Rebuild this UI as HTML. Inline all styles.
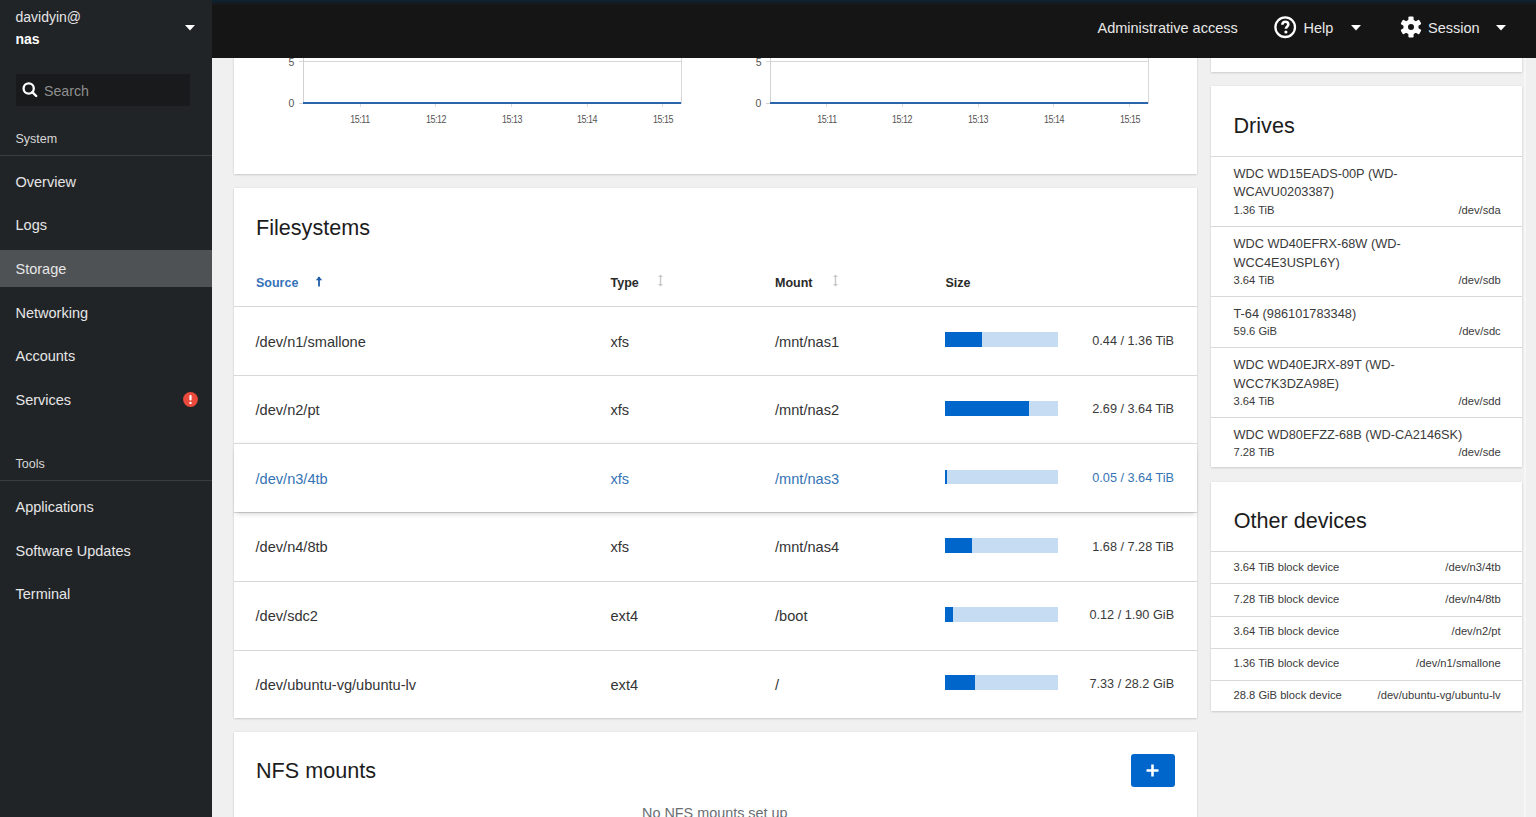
<!DOCTYPE html>
<html><head><meta charset="utf-8">
<style>
*{margin:0;padding:0;box-sizing:border-box}
html,body{width:1536px;height:817px;overflow:hidden;background:#f0f0f0;font-family:"Liberation Sans",sans-serif;color:#151515}
.a{position:absolute;white-space:nowrap;line-height:1}
#side{position:absolute;left:0;top:0;width:212px;height:817px;background:#212427}
#side .a{color:#e6e6e6}
#hdr{position:absolute;left:212px;top:0;width:1324px;height:58px;background:#151515}
#hdr .a{color:#e8e8e8}
.card{position:absolute;background:#fff;box-shadow:0 1px 2px 0 rgba(3,3,3,.14),0 0 2px 0 rgba(3,3,3,.06)}
.hl{position:absolute;height:1px;background:#d8d8d8}
.t{font-size:14.6px;color:#333}
.cap{font-size:12.5px;font-weight:bold;color:#2a2a2a}
.ttl{font-size:21.6px;color:#1c1c1c}
.pb{position:absolute;height:14.8px;width:113px;background:#c6dcf2}
.pb i{position:absolute;left:0;top:0;height:14.8px;background:#0066cc}
.sz{font-size:12.7px;color:#3a3a3a}
.dn{font-size:12.75px;color:#3a3a3a}
.ds{font-size:11.2px;color:#3a3a3a;margin-top:.8px}
.od{font-size:11.2px;color:#3a3a3a}
.ax{font-size:10.5px;color:#555}
.axl{font-size:10.5px;color:#555;width:40px;text-align:center;letter-spacing:-0.5px;transform:scaleX(.85)}
</style></head><body>

<div id="side">
  <div class="a" style="left:15.5px;top:9.5px;font-size:14px;">davidyin@</div>
  <div class="a" style="left:15.5px;top:31.5px;font-size:14px;font-weight:bold;color:#fff">nas</div>
  <svg style="position:absolute;left:185px;top:25px" width="10" height="6" viewBox="0 0 10 6"><path d="M0 0H10L5 5.5Z" fill="#fff"/></svg>
  <div style="position:absolute;left:16px;top:73.8px;width:174px;height:32.4px;background:#191a1b"></div>
  <svg style="position:absolute;left:22px;top:82.2px" width="16" height="16" viewBox="0 0 16 16"><circle cx="6.7" cy="6.5" r="5.1" fill="none" stroke="#fff" stroke-width="2.3"/><path d="M10.3 10.1L14.2 14" stroke="#fff" stroke-width="2.4" stroke-linecap="round"/></svg>
  <div class="a" style="left:44px;top:84px;font-size:14.2px;color:#8f8f8f">Search</div>
  <div class="a" style="left:15.5px;top:132.7px;font-size:12.5px;color:#d8d8d8">System</div>
  <div style="position:absolute;left:0;top:155px;width:212px;height:1px;background:#3a3d40"></div>
  <div class="a" style="left:15.5px;top:174.7px;font-size:14.5px">Overview</div>
  <div class="a" style="left:15.5px;top:218px;font-size:14.5px">Logs</div>
  <div style="position:absolute;left:0;top:250px;width:212px;height:36.6px;background:#4f5255"></div>
  <div class="a" style="left:15.5px;top:261.8px;font-size:14.5px">Storage</div>
  <div class="a" style="left:15.5px;top:305.9px;font-size:14.5px">Networking</div>
  <div class="a" style="left:15.5px;top:349.2px;font-size:14.5px">Accounts</div>
  <div class="a" style="left:15.5px;top:392.7px;font-size:14.5px">Services</div>
  <svg style="position:absolute;left:182.6px;top:391.7px" width="15" height="15" viewBox="0 0 15 15"><circle cx="7.5" cy="7.5" r="7.4" fill="#ec4a3c"/><rect x="6.4" y="3" width="2.2" height="5.6" rx="1" fill="#fff"/><circle cx="7.5" cy="10.9" r="1.2" fill="#fff"/></svg>
  <div class="a" style="left:15.5px;top:458.1px;font-size:12.5px;color:#d8d8d8">Tools</div>
  <div style="position:absolute;left:0;top:479.5px;width:212px;height:1px;background:#3a3d40"></div>
  <div class="a" style="left:15.5px;top:499.9px;font-size:14.5px">Applications</div>
  <div class="a" style="left:15.5px;top:543.6px;font-size:14.5px">Software Updates</div>
  <div class="a" style="left:15.5px;top:587.2px;font-size:14.5px">Terminal</div>
</div>

<div id="hdr">
  <div style="position:absolute;left:0;top:0;width:1324px;height:8px;background:linear-gradient(#0f2436 0,#111d29 2px,#17181b 4.5px,#161514 6px,#151515 8px)"></div>
  <div class="a" style="left:885.5px;top:21px;font-size:14.5px">Administrative access</div>
  <svg style="position:absolute;left:1062px;top:16px" width="23" height="23" viewBox="0 0 23 23"><circle cx="11.2" cy="11.2" r="9.8" fill="none" stroke="#fff" stroke-width="2.3"/><path d="M8.3 8.8C8.3 6.8 9.7 5.8 11.3 5.8C13 5.8 14.3 6.9 14.3 8.5C14.3 10.5 11.9 10.7 11.9 12.7" fill="none" stroke="#fff" stroke-width="2.6"/><circle cx="11.9" cy="16" r="1.6" fill="#fff"/></svg>
  <div class="a" style="left:1091.5px;top:20.5px;font-size:14.5px">Help</div>
  <svg style="position:absolute;left:1139px;top:25px" width="10" height="6" viewBox="0 0 10 6"><path d="M0 0H10L5 5.5Z" fill="#fff"/></svg>
  <svg style="position:absolute;left:1187.5px;top:16.2px" width="22" height="22" viewBox="-11 -11 22 22"><g fill="#fff"><circle r="7.6"/><rect x="-2.6" y="-10.6" width="5.2" height="21.2" rx="1"/><rect x="-2.6" y="-10.6" width="5.2" height="21.2" rx="1" transform="rotate(60)"/><rect x="-2.6" y="-10.6" width="5.2" height="21.2" rx="1" transform="rotate(120)"/></g><circle r="3" fill="#151515"/></svg>
  <div class="a" style="left:1216px;top:20.5px;font-size:14.5px">Session</div>
  <svg style="position:absolute;left:1283.5px;top:25px" width="10" height="6" viewBox="0 0 10 6"><path d="M0 0H10L5 5.5Z" fill="#fff"/></svg>
</div>

<!-- main -->
<div id="main" style="position:absolute;left:212px;top:58px;width:1324px;height:759px;background:#f0f0f0;overflow:hidden">
  <!-- scrollbar track -->
  <div style="position:absolute;left:1312px;top:0;width:2px;height:759px;background:#f6f6f6"></div>

  <!-- chart card -->
  <div class="card" style="left:22px;top:-40px;width:962.6px;height:155.8px"></div>
  <!-- chart 1 -->
  <div style="position:absolute;left:86.5px;top:3px;width:383px;height:1px;background:#d8d8d8"></div>
  <div style="position:absolute;left:91px;top:0;width:1px;height:46px;background:#d2d2d2"></div>
  <div style="position:absolute;left:469px;top:0;width:1px;height:46px;background:#d8d8d8"></div>
  <div style="position:absolute;left:86.5px;top:44.5px;width:4px;height:1px;background:#d2d2d2"></div>
  <div style="position:absolute;left:91px;top:44px;width:378px;height:2px;background:#2a64ab"></div>
  <div class="a ax" style="left:76.6px;top:-1.5px">5</div>
  <div class="a ax" style="left:76.4px;top:40.4px">0</div>
  <div class="a axl" style="left:128px;top:55.9px">15:11</div>
  <div class="a axl" style="left:203.6px;top:55.9px">15:12</div>
  <div class="a axl" style="left:279.5px;top:55.9px">15:13</div>
  <div class="a axl" style="left:355.3px;top:55.9px">15:14</div>
  <div class="a axl" style="left:430.8px;top:55.9px">15:15</div>
  <div class="a axl" style="left:594.6px;top:55.9px">15:11</div>
  <div class="a axl" style="left:670.4px;top:55.9px">15:12</div>
  <div class="a axl" style="left:746.3px;top:55.9px">15:13</div>
  <div class="a axl" style="left:821.8px;top:55.9px">15:14</div>
  <div class="a axl" style="left:897.6px;top:55.9px">15:15</div>
  <div style="position:absolute;left:147.5px;top:46px;width:1px;height:3px;background:#d6dde6"></div><div style="position:absolute;left:223.1px;top:46px;width:1px;height:3px;background:#d6dde6"></div><div style="position:absolute;left:299.0px;top:46px;width:1px;height:3px;background:#d6dde6"></div><div style="position:absolute;left:374.8px;top:46px;width:1px;height:3px;background:#d6dde6"></div><div style="position:absolute;left:450.3px;top:46px;width:1px;height:3px;background:#d6dde6"></div><div style="position:absolute;left:614.1px;top:46px;width:1px;height:3px;background:#d6dde6"></div><div style="position:absolute;left:689.9px;top:46px;width:1px;height:3px;background:#d6dde6"></div><div style="position:absolute;left:765.8px;top:46px;width:1px;height:3px;background:#d6dde6"></div><div style="position:absolute;left:841.3px;top:46px;width:1px;height:3px;background:#d6dde6"></div><div style="position:absolute;left:917.1px;top:46px;width:1px;height:3px;background:#d6dde6"></div>
  <!-- chart 2 -->
  <div style="position:absolute;left:553.5px;top:3px;width:382.5px;height:1px;background:#d8d8d8"></div>
  <div style="position:absolute;left:558px;top:0;width:1px;height:46px;background:#d2d2d2"></div>
  <div style="position:absolute;left:935.5px;top:0;width:1px;height:46px;background:#d8d8d8"></div>
  <div style="position:absolute;left:553.5px;top:44.5px;width:4px;height:1px;background:#d2d2d2"></div>
  <div style="position:absolute;left:558px;top:44px;width:378px;height:2px;background:#2a64ab"></div>
  <div class="a ax" style="left:543.8px;top:-1.5px">5</div>
  <div class="a ax" style="left:543.6px;top:40.4px">0</div>

  <!-- filesystems card -->
  <div class="card" style="left:22px;top:130px;width:962.6px;height:529.9px">
    <div class="a ttl" style="left:22px;top:28.5px">Filesystems</div>
    <div class="a cap" style="left:22px;top:88.5px;color:#3572b8">Source</div>
    <svg style="position:absolute;left:81px;top:88px" width="8" height="11" viewBox="0 0 8 11"><path d="M4 1V10.6" stroke="#1f5ca6" stroke-width="1.8"/><path d="M0.8 4.2L4 0.6L7.2 4.2Z" fill="#1f5ca6"/></svg>
    <div class="a cap" style="left:376.5px;top:88.6px">Type</div>
    <svg style="position:absolute;left:422.5px;top:86px" width="7" height="13" viewBox="0 0 7 13"><path d="M3.5 2V11" stroke="#c8c8c8" stroke-width="1.4"/><path d="M1 3L3.5 0.5L6 3Z M1 10L3.5 12.5L6 10Z" fill="#c8c8c8"/></svg>
    <div class="a cap" style="left:541px;top:88.6px">Mount</div>
    <svg style="position:absolute;left:597.5px;top:86px" width="7" height="13" viewBox="0 0 7 13"><path d="M3.5 2V11" stroke="#c8c8c8" stroke-width="1.4"/><path d="M1 3L3.5 0.5L6 3Z M1 10L3.5 12.5L6 10Z" fill="#c8c8c8"/></svg>
    <div class="a cap" style="left:711.5px;top:88.6px">Size</div>
    <div class="hl" style="left:0;top:118px;width:963px"></div>
    <!-- rows -->
    <div class="a t" style="left:21.5px;top:146.64px;">/dev/n1/smallone</div>
<div class="a t" style="left:376.5px;top:146.64px;">xfs</div>
<div class="a t" style="left:541px;top:146.64px;">/mnt/nas1</div>
<div class="pb" style="left:711px;top:144.4px;"><i style="width:37.2px"></i></div>
<div class="a sz" style="right:22.5px;top:146.75px;">0.44 / 1.36 TiB</div>
<div class="hl" style="left:0;top:187.1px;width:963px"></div>
<div class="a t" style="left:21.5px;top:215.24px;">/dev/n2/pt</div>
<div class="a t" style="left:376.5px;top:215.24px;">xfs</div>
<div class="a t" style="left:541px;top:215.24px;">/mnt/nas2</div>
<div class="pb" style="left:711px;top:213.0px;"><i style="width:83.7px"></i></div>
<div class="a sz" style="right:22.5px;top:215.35px;">2.69 / 3.64 TiB</div>
<div class="hl" style="left:0;top:255.7px;width:963px"></div>
<div style="position:absolute;left:-0.3px;top:256px;width:963px;height:68.2px;background:#fff;box-shadow:0 -1px 0 #d8d8d8,0 4px 5px -2px rgba(3,3,3,.16),0 -3px 5px -3px rgba(3,3,3,.10);z-index:1"></div>
<div class="a t" style="left:21.5px;top:283.84px;color:#3574b4;z-index:2;">/dev/n3/4tb</div>
<div class="a t" style="left:376.5px;top:283.84px;color:#3574b4;z-index:2;">xfs</div>
<div class="a t" style="left:541px;top:283.84px;color:#3574b4;z-index:2;">/mnt/nas3</div>
<div class="pb" style="left:711px;top:281.6px;z-index:2;"><i style="width:2px"></i></div>
<div class="a sz" style="right:22.5px;top:283.95px;color:#3574b4;z-index:2;">0.05 / 3.64 TiB</div>
<div class="hl" style="left:0;top:324.3px;width:963px"></div>
<div class="a t" style="left:21.5px;top:352.44px;">/dev/n4/8tb</div>
<div class="a t" style="left:376.5px;top:352.44px;">xfs</div>
<div class="a t" style="left:541px;top:352.44px;">/mnt/nas4</div>
<div class="pb" style="left:711px;top:350.2px;"><i style="width:27px"></i></div>
<div class="a sz" style="right:22.5px;top:352.55px;">1.68 / 7.28 TiB</div>
<div class="hl" style="left:0;top:392.9px;width:963px"></div>
<div class="a t" style="left:21.5px;top:421.04px;">/dev/sdc2</div>
<div class="a t" style="left:376.5px;top:421.04px;">ext4</div>
<div class="a t" style="left:541px;top:421.04px;">/boot</div>
<div class="pb" style="left:711px;top:418.8px;"><i style="width:8px"></i></div>
<div class="a sz" style="right:22.5px;top:421.15px;">0.12 / 1.90 GiB</div>
<div class="hl" style="left:0;top:461.5px;width:963px"></div>
<div class="a t" style="left:21.5px;top:489.64px;">/dev/ubuntu-vg/ubuntu-lv</div>
<div class="a t" style="left:376.5px;top:489.64px;">ext4</div>
<div class="a t" style="left:541px;top:489.64px;">/</div>
<div class="pb" style="left:711px;top:487.4px;"><i style="width:29.5px"></i></div>
<div class="a sz" style="right:22.5px;top:489.75px;">7.33 / 28.2 GiB</div>
  </div>

  <!-- NFS card -->
  <div class="card" style="left:22px;top:673.6px;width:962.6px;height:200px">
    <div class="a ttl" style="left:22px;top:28.8px">NFS mounts</div>
    <div style="position:absolute;left:897px;top:22.6px;width:44px;height:32.7px;background:#0066cc;border-radius:3px"></div>
    <svg style="position:absolute;left:912.4px;top:32.1px" width="13" height="13" viewBox="0 0 13 13"><path d="M6.5 0.5V12.5M0.5 6.5H12.5" stroke="#fff" stroke-width="2.6"/></svg>
    <div class="a" style="left:408px;top:74px;font-size:14.4px;color:#6a6e73">No NFS mounts set up</div>
  </div>

  <!-- right column -->
  <div class="card" style="left:999px;top:-40px;width:311px;height:54px"></div>

  <div class="card" style="left:999px;top:28.4px;width:311px;height:381px">
    <div class="a ttl" style="left:22.5px;top:28.6px">Drives</div>
    <div class="hl" style="left:0;top:69.8px;width:311px"></div>
<div class="a dn" style="left:22.5px;top:81.21px">WDC WD15EADS-00P (WD-</div>
<div class="a dn" style="left:22.5px;top:100.01px">WCAVU0203387)</div>
<div class="a ds" style="left:22.5px;top:118.22px">1.36 TiB</div>
<div class="a ds" style="right:21.3px;top:118.22px">/dev/sda</div>
<div class="hl" style="left:0;top:139.9px;width:311px"></div>
<div class="a dn" style="left:22.5px;top:151.41px">WDC WD40EFRX-68W (WD-</div>
<div class="a dn" style="left:22.5px;top:170.51px">WCC4E3USPL6Y)</div>
<div class="a ds" style="left:22.5px;top:187.72px">3.64 TiB</div>
<div class="a ds" style="right:21.3px;top:187.72px">/dev/sdb</div>
<div class="hl" style="left:0;top:210.0px;width:311px"></div>
<div class="a dn" style="left:22.5px;top:221.41px">T-64 (986101783348)</div>
<div class="a ds" style="left:22.5px;top:238.62px">59.6 GiB</div>
<div class="a ds" style="right:21.3px;top:238.62px">/dev/sdc</div>
<div class="hl" style="left:0;top:260.9px;width:311px"></div>
<div class="a dn" style="left:22.5px;top:272.31px">WDC WD40EJRX-89T (WD-</div>
<div class="a dn" style="left:22.5px;top:291.41px">WCC7K3DZA98E)</div>
<div class="a ds" style="left:22.5px;top:308.62px">3.64 TiB</div>
<div class="a ds" style="right:21.3px;top:308.62px">/dev/sdd</div>
<div class="hl" style="left:0;top:330.9px;width:311px"></div>
<div class="a dn" style="left:22.5px;top:342.31px">WDC WD80EFZZ-68B (WD-CA2146SK)</div>
<div class="a ds" style="left:22.5px;top:359.52px">7.28 TiB</div>
<div class="a ds" style="right:21.3px;top:359.52px">/dev/sde</div>
  </div>

  <div class="card" style="left:999px;top:424.2px;width:311px;height:228.6px">
    <div class="a ttl" style="left:22.7px;top:28.3px">Other devices</div>
    <div class="hl" style="left:0;top:69.2px;width:311px"></div>
<div class="a od" style="left:22.5px;top:79.92px">3.64 TiB block device</div>
<div class="a od" style="right:21.3px;top:79.92px">/dev/n3/4tb</div>
<div class="hl" style="left:0;top:101.3px;width:311px"></div>
<div class="a od" style="left:22.5px;top:111.97px">7.28 TiB block device</div>
<div class="a od" style="right:21.3px;top:111.97px">/dev/n4/8tb</div>
<div class="hl" style="left:0;top:133.35px;width:311px"></div>
<div class="a od" style="left:22.5px;top:144.02px">3.64 TiB block device</div>
<div class="a od" style="right:21.3px;top:144.02px">/dev/n2/pt</div>
<div class="hl" style="left:0;top:165.4px;width:311px"></div>
<div class="a od" style="left:22.5px;top:176.07px">1.36 TiB block device</div>
<div class="a od" style="right:21.3px;top:176.07px">/dev/n1/smallone</div>
<div class="hl" style="left:0;top:197.45px;width:311px"></div>
<div class="a od" style="left:22.5px;top:208.12px">28.8 GiB block device</div>
<div class="a od" style="right:21.3px;top:208.12px">/dev/ubuntu-vg/ubuntu-lv</div>
  </div>
</div>
</body></html>
